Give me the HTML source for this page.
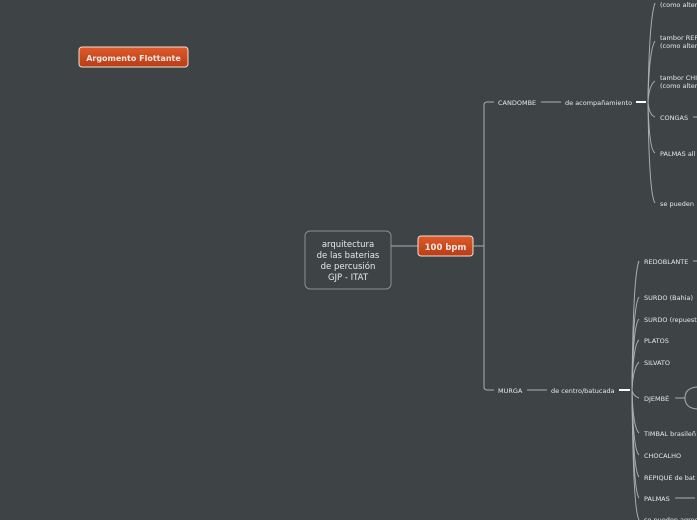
<!DOCTYPE html>
<html><head><meta charset="utf-8"><style>
html,body{margin:0;padding:0;background:#3e4445;width:697px;height:520px;overflow:hidden}
svg{display:block}
text{font-family:"DejaVu Sans","Liberation Sans",sans-serif;fill:#e8e8e8}
</style></head><body>
<svg width="697" height="520" viewBox="0 0 697 520">
<defs><linearGradient id="og" x1="0" y1="0" x2="0" y2="1"><stop offset="0" stop-color="#e05a2a"/><stop offset="1" stop-color="#b83c14"/></linearGradient></defs>
<rect width="697" height="520" fill="#3e4445"/>
<!-- Argomento -->
<rect x="79" y="47" width="109" height="20" rx="3" fill="url(#og)" stroke="#f0e0d8" stroke-width="1"/>
<text x="133.5" y="61" font-size="8" font-weight="bold" text-anchor="middle" fill="#fff">Argomento Flottante</text>
<!-- root -->
<rect x="305" y="231" width="86" height="58" rx="5" fill="#3e4445" stroke="#8a9090" stroke-width="1"/>
<g font-size="8.5" text-anchor="middle"><text x="348" y="247">arquitectura</text><text x="348" y="258">de las baterias</text><text x="348" y="269">de percusión</text><text x="348" y="280">GJP - ITAT</text></g>
<line x1="391" y1="246" x2="418" y2="246" stroke="#aab" stroke-width="1"/>
<rect x="418" y="236" width="55" height="20" rx="3" fill="url(#og)" stroke="#f0e0d8"/>
<text x="445.5" y="250" font-size="8.5" font-weight="bold" text-anchor="middle" fill="#fff">100 bpm</text>
<g stroke="#aaaeae" stroke-width="1" fill="none">
<line x1="473" y1="246" x2="484" y2="246"/>
<path d="M494 102 H487 Q484 102 484 105 V387 Q484 390 487 390 H494"/>
<line x1="541" y1="102" x2="561" y2="102"/>
<line x1="527" y1="390" x2="547" y2="390"/>
<!-- candombe children -->
<path d="M648 102 Q649 20 655 3"/>
<path d="M648 102 Q649 50 655 41"/>
<path d="M648 102 Q649 85 655 81"/>
<path d="M648 102 Q649 115 655 117"/>
<path d="M648 102 Q649 150 655 153"/>
<path d="M648 102 Q649 195 655 203"/>
<line x1="693" y1="117" x2="697" y2="117"/>
<!-- murga children -->
<path d="M632 390 Q633 275 639 261"/>
<path d="M632 390 Q633 305 639 297"/>
<path d="M632 390 Q633 325 639 319"/>
<path d="M632 390 Q633 345 639 340"/>
<path d="M632 390 Q633 368 639 362"/>
<path d="M632 390 Q633 396 639 398"/>
<path d="M632 390 Q633 428 639 433"/>
<path d="M632 390 Q633 450 639 455"/>
<path d="M632 390 Q633 470 639 477"/>
<path d="M632 390 Q633 490 639 498"/>
<path d="M632 390 Q633 510 639 520"/>
<line x1="693" y1="261" x2="697" y2="261"/>
<line x1="675" y1="498" x2="695" y2="498"/>
<line x1="675" y1="398" x2="685" y2="398"/>
<path d="M697 387 Q685 388 685 398 Q685 408 697 409"/>
</g>
<g stroke="#fff" stroke-width="2"><line x1="636" y1="102" x2="646" y2="102"/><line x1="619" y1="390" x2="630" y2="390"/></g>
<g font-size="6.5">
<text x="498" y="105">CANDOMBE</text><text x="565" y="105">de acompañamiento</text>
<text x="498" y="393">MURGA</text><text x="551" y="393">de centro/batucada</text>
<text x="660" y="7">(como alter</text>
<text x="660" y="40">tambor REP</text><text x="660" y="48">(como alter</text>
<text x="660" y="80">tambor CHI</text><text x="660" y="88">(como alter</text>
<text x="660" y="120">CONGAS</text><text x="660" y="156">PALMAS all</text><text x="660" y="206">se pueden</text>
<text x="644" y="264">REDOBLANTE</text><text x="644" y="300">SURDO (Bahia)</text><text x="644" y="322">SURDO (repuest</text>
<text x="644" y="343">PLATOS</text><text x="644" y="365">SILVATO</text><text x="644" y="401">DJEMBÉ</text>
<text x="644" y="436">TIMBAL brasileñ</text><text x="644" y="458">CHOCALHO</text><text x="644" y="480">REPIQUE de bat</text>
<text x="644" y="501">PALMAS</text><text x="644" y="522">se pueden agreg</text>
</g>
</svg>
</body></html>
